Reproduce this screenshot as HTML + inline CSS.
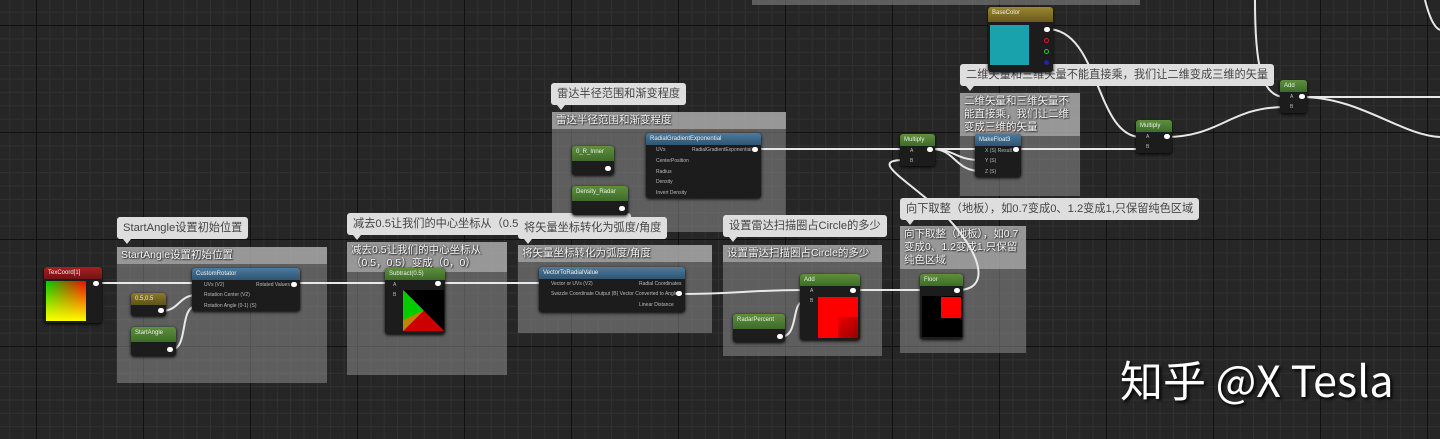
<!DOCTYPE html>
<html><head><meta charset="utf-8"><style>
*{margin:0;padding:0;box-sizing:border-box}
body{width:1440px;height:439px;overflow:hidden;background:#262626;font-family:"Liberation Sans","Noto Sans CJK SC",sans-serif;position:relative}
.grid{position:absolute;inset:0;background-image:
linear-gradient(to right,#111 1px,transparent 1px),
linear-gradient(to bottom,#111 1px,transparent 1px),
linear-gradient(to right,#313131 1px,transparent 1px),
linear-gradient(to bottom,#313131 1px,transparent 1px);
background-size:107px 107px,107px 107px,13.375px 13.375px,13.375px 13.375px;
background-position:36px 25px,36px 25px,36px 25px,36px 25px}
.cb{position:absolute;background:rgba(140,140,140,.55)}
.cb .h{background:rgba(190,190,190,.6);color:#f4f4f4;font-size:10.5px;line-height:13px;padding:2px 4px;text-shadow:0 0 2px #333,1px 1px 1px #333}
.bub{position:absolute;background:#dedede;color:#444;font-size:11.2px;line-height:22px;height:22px;padding:0 6px;border-radius:3px;white-space:nowrap}
.bub:after{content:"";position:absolute;left:6px;bottom:-5px;border:4px solid transparent;border-top:5px solid #dedede;border-bottom:0}
.n{position:absolute;background:#1c1c1c;border-radius:3px;box-shadow:0 1px 3px #000;font-size:5px;color:#bbb}
.n .t{height:12px;border-radius:3px 3px 0 0;color:#eee;font-size:6px;line-height:12px;padding-left:4px;white-space:nowrap;overflow:hidden}
.g{background:linear-gradient(#5d8f3d,#3e6b2a)}
.b{background:linear-gradient(#4d7a9e,#2e5572)}
.r{background:linear-gradient(#a82020,#741414)}
.y{background:linear-gradient(#8a7a2a,#5e5218)}
.p{position:absolute;white-space:nowrap}
.o{position:absolute;width:6px;height:5px;background:#fff;border-radius:3px}
.wm{position:absolute;left:1120px;top:348px;color:#fff;font-size:43px;font-family:"Noto Sans CJK SC","Liberation Sans",sans-serif;text-shadow:2px 2px 3px #000;white-space:nowrap}
</style></head><body>
<div class="grid"></div>
<div class="cb" style="left:752px;top:0;width:388px;height:5px"></div>

<div class="cb" style="left:117px;top:247px;width:210px;height:136px"><div class="h">StartAngle设置初始位置</div></div>
<div class="cb" style="left:347px;top:242px;width:160px;height:133px"><div class="h">减去0.5让我们的中心坐标从（0.5，0.5）变成（0，0）</div></div>
<div class="cb" style="left:518px;top:245px;width:194px;height:88px"><div class="h">将矢量坐标转化为弧度/角度</div></div>
<div class="cb" style="left:552px;top:112px;width:234px;height:120px"><div class="h">雷达半径范围和渐变程度</div></div>
<div class="cb" style="left:723px;top:245px;width:159px;height:111px"><div class="h" style="white-space:nowrap;overflow:hidden">设置雷达扫描圈占Circle的多少</div></div>
<div class="cb" style="left:900px;top:226px;width:126px;height:127px"><div class="h">向下取整（地板），如0.7变成0、1.2变成1,只保留纯色区域</div></div>
<div class="cb" style="left:960px;top:93px;width:120px;height:103px"><div class="h">二维矢量和三维矢量不能直接乘，我们让二维变成三维的矢量</div></div>

<svg width="1440" height="439" style="position:absolute;left:0;top:0" fill="none" stroke="#e8e8e8" stroke-width="2">
<path d="M96 283H197"/><path d="M294 283H544"/>
<path d="M161 311C180 311 178 295 197 295"/>
<path d="M170 350C190 350 178 306 197 306"/>
<path d="M679 294C740 294 745 290 805 290"/>
<path d="M780 337C800 337 790 301 805 301"/>
<path d="M853 290H925"/>
<path d="M958 290C990 290 985 255 940 210C900 175 870 160 905 160"/>
<path d="M754 149H905"/>
<path d="M932 149H980"/><path d="M932 149C955 149 955 160 980 160"/><path d="M932 149C955 149 955 171 980 171"/>
<path d="M1016 149H1141"/>
<path d="M1047 29C1100 29 1095 137 1141 137"/>
<path d="M1166 137C1220 137 1230 107 1285 107"/>
<path d="M1255 0C1255 60 1260 97 1285 97"/>
<path d="M1301 97H1440"/>
<path d="M1301 97C1360 97 1400 135 1440 137"/>
<path d="M1425 0C1430 20 1435 28 1440 30"/>
</svg>

<div class="bub" style="left:117px;top:217px">StartAngle设置初始位置</div>
<div class="bub" style="left:347px;top:213px">减去0.5让我们的中心坐标从（0.5，0.5）变成（0，0）</div>
<div class="bub" style="left:518px;top:217px">将矢量坐标转化为弧度/角度</div>
<div class="bub" style="left:551px;top:83px">雷达半径范围和渐变程度</div>
<div class="bub" style="left:723px;top:215px">设置雷达扫描圈占Circle的多少</div>
<div class="bub" style="left:900px;top:198px">向下取整（地板），如0.7变成0、1.2变成1,只保留纯色区域</div>
<div class="bub" style="left:960px;top:64px">二维矢量和三维矢量不能直接乘，我们让二维变成三维的矢量</div>

<div class="n" style="left:44px;top:267px;width:58px;height:56px"><div class="t r">TexCoord[1]</div><div style="position:absolute;left:2px;top:14px;width:40px;height:40px;background:linear-gradient(to bottom,transparent,#ff0 ),linear-gradient(to right,#0c0,#f00)"></div><div class="o" style="left:49px;top:14px"></div></div>
<div class="n" style="left:192px;top:268px;width:108px;height:43px"><div class="t b">CustomRotator</div><div class="p" style="left:12px;top:14px">UVs (V2)</div><div class="p" style="left:12px;top:24px">Rotation Center (V2)</div><div class="p" style="left:12px;top:35px">Rotation Angle (0-1) (S)</div><div class="p" style="left:64px;top:14px">Rotated Values</div><div class="o" style="left:99px;top:14px"></div></div>
<div class="n" style="left:131px;top:293px;width:35px;height:23px"><div class="t y">0.5,0.5</div><div class="o" style="left:27px;top:15px"></div></div>
<div class="n" style="left:131px;top:327px;width:45px;height:29px"><div class="t g" style="height:15px">StartAngle</div><div class="o" style="left:36px;top:20px"></div></div>
<div class="n" style="left:385px;top:268px;width:60px;height:66px"><div class="t g">Subtract(0.5)</div><div class="p" style="left:8px;top:14px">A</div><div class="p" style="left:8px;top:24px">B</div><div class="o" style="left:50px;top:13px"></div><div style="position:absolute;left:18px;top:22px;width:41px;height:41px;background:conic-gradient(from 45deg at 50% 50%,#000 0 90deg,#c00 90deg 180deg,#b80 180deg 200deg,#0c0 200deg 270deg,#000 270deg)"></div></div>
<div class="n" style="left:539px;top:267px;width:146px;height:45px"><div class="t b">VectorToRadialValue</div><div class="p" style="left:12px;top:14px">Vector or UVs (V2)</div><div class="p" style="left:12px;top:24px">Swizzle Coordinate Output (B)&nbsp;Vector Converted to Angle</div><div class="p" style="left:100px;top:14px">Radial Coordinates</div><div class="p" style="left:100px;top:35px">Linear Distance</div><div class="o" style="left:137px;top:24px"></div></div>
<div class="n" style="left:646px;top:133px;width:115px;height:65px"><div class="t b">RadialGradientExponential</div><div class="p" style="left:10px;top:14px">UVs</div><div class="p" style="left:10px;top:25px">CenterPosition</div><div class="p" style="left:10px;top:36px">Radius</div><div class="p" style="left:10px;top:46px">Density</div><div class="p" style="left:10px;top:57px">Invert Density</div><div class="p" style="left:46px;top:14px">RadialGradientExponential</div><div class="o" style="left:106px;top:14px"></div></div>
<div class="n" style="left:572px;top:146px;width:42px;height:29px"><div class="t g" style="height:15px">0_R_Inner</div><div class="o" style="left:33px;top:20px"></div></div>
<div class="n" style="left:572px;top:186px;width:56px;height:29px"><div class="t g" style="height:15px">Density_Radar</div><div class="o" style="left:47px;top:20px"></div></div>
<div class="n" style="left:800px;top:274px;width:60px;height:66px"><div class="t g">Add</div><div class="p" style="left:10px;top:14px">A</div><div class="p" style="left:10px;top:24px">B</div><div class="o" style="left:50px;top:14px"></div><div style="position:absolute;left:18px;top:23px;width:40px;height:41px;background:#f00"></div><div style="position:absolute;left:38px;top:43px;width:20px;height:21px;background:linear-gradient(135deg,#e00,#900)"></div></div>
<div class="n" style="left:733px;top:314px;width:52px;height:28px"><div class="t g" style="height:15px">RadarPercent</div><div class="o" style="left:44px;top:20px"></div></div>
<div class="n" style="left:920px;top:274px;width:43px;height:65px"><div class="t g">Floor</div><div class="o" style="left:34px;top:14px"></div><div style="position:absolute;left:2px;top:22px;width:40px;height:41px;background:#000"></div><div style="position:absolute;left:21px;top:23px;width:20px;height:21px;background:#f00"></div></div>
<div class="n" style="left:900px;top:134px;width:35px;height:32px"><div class="t g">Multiply</div><div class="p" style="left:10px;top:14px">A</div><div class="p" style="left:10px;top:24px">B</div><div class="o" style="left:27px;top:13px"></div></div>
<div class="n" style="left:975px;top:134px;width:46px;height:43px"><div class="t b">MakeFloat3</div><div class="p" style="left:10px;top:14px">X (S)&nbsp;Result</div><div class="p" style="left:10px;top:24px">Y (S)</div><div class="p" style="left:10px;top:35px">Z (S)</div><div class="o" style="left:38px;top:13px"></div></div>
<div class="n" style="left:988px;top:7px;width:65px;height:65px"><div class="t y" style="height:15px;background:linear-gradient(#9a8630,#6a5a1c)">BaseColor</div><div style="position:absolute;left:2px;top:18px;width:39px;height:40px;background:#1aa2ac"></div><div class="o" style="left:56px;top:20px"></div>
<div style="position:absolute;left:56px;top:31px;width:5px;height:5px;border:1px solid #c22;border-radius:50%"></div><div style="position:absolute;left:56px;top:42px;width:5px;height:5px;border:1px solid #2c2;border-radius:50%"></div><div style="position:absolute;left:56px;top:53px;width:5px;height:5px;background:#22a;border-radius:50%"></div></div>
<div class="n" style="left:1136px;top:120px;width:36px;height:33px"><div class="t g">Multiply</div><div class="p" style="left:10px;top:14px">A</div><div class="p" style="left:10px;top:24px">B</div><div class="o" style="left:28px;top:14px"></div></div>
<div class="n" style="left:1280px;top:80px;width:27px;height:33px"><div class="t g">Add</div><div class="p" style="left:10px;top:14px">A</div><div class="p" style="left:10px;top:24px">B</div><div class="o" style="left:19px;top:14px"></div></div>

<div class="wm">知乎 @X Tesla</div>
</body></html>
